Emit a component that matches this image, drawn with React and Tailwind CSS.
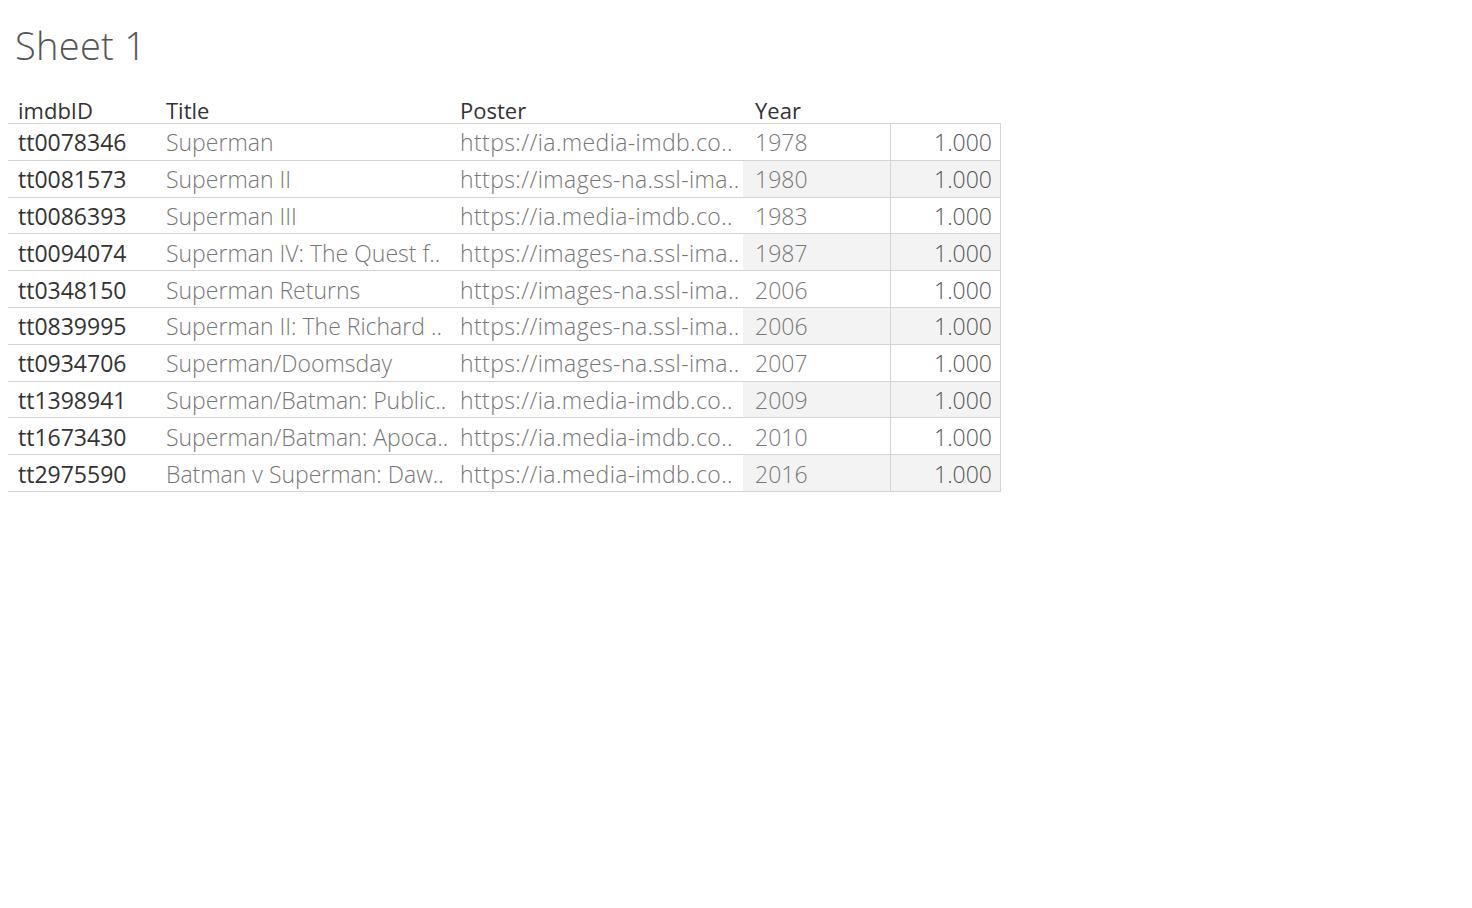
const rows = [
  ['tt0078346', 'Superman', 'https://ia.media-imdb.co..', '1978'],
  ['tt0081573', 'Superman II', 'https://images-na.ssl-ima..', '1980'],
  ['tt0086393', 'Superman III', 'https://ia.media-imdb.co..', '1983'],
  ['tt0094074', 'Superman IV: The Quest f..', 'https://images-na.ssl-ima..', '1987'],
  ['tt0348150', 'Superman Returns', 'https://images-na.ssl-ima..', '2006'],
  ['tt0839995', 'Superman II: The Richard ..', 'https://images-na.ssl-ima..', '2006'],
  ['tt0934706', 'Superman/Doomsday', 'https://images-na.ssl-ima..', '2007'],
  ['tt1398941', 'Superman/Batman: Public..', 'https://ia.media-imdb.co..', '2009'],
  ['tt1673430', 'Superman/Batman: Apoca..', 'https://ia.media-imdb.co..', '2010'],
  ['tt2975590', 'Batman v Superman: Daw..', 'https://ia.media-imdb.co..', '2016'],
]

export default function App() {
  return (
    <div className="min-h-[908px] w-[1472px] bg-white font-['Open_Sans','Noto_Sans',sans-serif]">
      <div className="pl-[15px] pt-[20px] h-[95px]">
        <h1 className="text-[38px] font-light leading-[50px] tracking-[0.3px] text-[#555]">Sheet 1</h1>
      </div>

      <div className="ml-2 w-[993px]">
        <div className="flex h-[28px] items-end text-[22px] leading-[26px] text-[#333]">
          <div className="w-[147px] pl-[10px]">imdbID</div>
          <div className="w-[295px] pl-[11px]">Title</div>
          <div className="w-[293px] pl-[10px]">Poster</div>
          <div className="w-[147px] pl-[12px]">Year</div>
        </div>

        <div className="border-t border-[#d4d4d4]">
          {rows.map((r, i) => {
            const shade = i % 2 === 1
            return (
              <div key={r[0]} className="flex h-[36.8px] border-b border-[#d4d4d4] text-[23px] leading-none">
                <div className="w-[147px] pl-[10px] pt-[2px] flex items-center text-[#333]">{r[0]}</div>
                <div className="w-[295px] pl-[11px] pt-[2px] flex items-center font-light text-[#777] whitespace-nowrap overflow-hidden">{r[1]}</div>
                <div className="w-[293px] pl-[10px] pt-[2px] flex items-center font-light text-[#777] tracking-[0.4px] whitespace-nowrap overflow-hidden">{r[2]}</div>
                <div className={`w-[147px] pl-[12px] pt-[2px] flex items-center font-light text-[#777] ${shade ? 'bg-[#f3f3f3]' : 'bg-white'}`}>{r[3]}</div>
                <div className={`w-[111px] border-l border-r border-[#d4d4d4] pr-[8px] pt-[2px] flex items-center justify-end font-light text-[#555] ${shade ? 'bg-[#f3f3f3]' : 'bg-white'}`}>1.000</div>
              </div>
            )
          })}
        </div>
      </div>
    </div>
  )
}
